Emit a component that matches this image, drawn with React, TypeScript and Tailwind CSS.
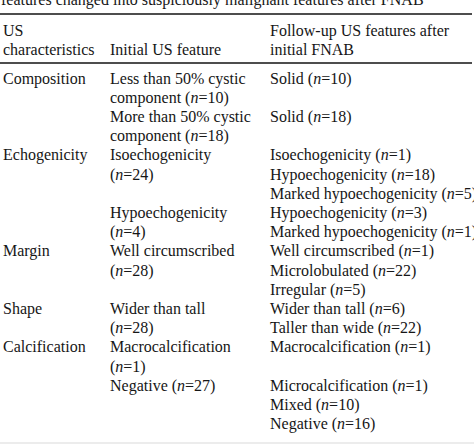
import { Fragment } from 'react';

type SubRow = {
  initial: string[];
  followUp: string[];
};

type Group = {
  name: string;
  rows: SubRow[];
};

// lines are written as "text|n" where the part after | is the italic-n count
const groups: Group[] = [
  {
    name: 'Composition',
    rows: [
      { initial: ['Less than 50% cystic', 'component |10'], followUp: ['Solid |10'] },
      { initial: ['More than 50% cystic', 'component |18'], followUp: ['Solid |18'] },
    ],
  },
  {
    name: 'Echogenicity',
    rows: [
      {
        initial: ['Isoechogenicity', '|24'],
        followUp: ['Isoechogenicity |1', 'Hypoechogenicity |18', 'Marked hypoechogenicity |5'],
      },
      {
        initial: ['Hypoechogenicity', '|4'],
        followUp: ['Hypoechogenicity |3', 'Marked hypoechogenicity |1'],
      },
    ],
  },
  {
    name: 'Margin',
    rows: [
      {
        initial: ['Well circumscribed', '|28'],
        followUp: ['Well circumscribed |1', 'Microlobulated |22', 'Irregular |5'],
      },
    ],
  },
  {
    name: 'Shape',
    rows: [
      {
        initial: ['Wider than tall', '|28'],
        followUp: ['Wider than tall |6', 'Taller than wide |22'],
      },
    ],
  },
  {
    name: 'Calcification',
    rows: [
      { initial: ['Macrocalcification', '|1'], followUp: ['Macrocalcification |1'] },
      {
        initial: ['Negative |27'],
        followUp: ['Microcalcification |1', 'Mixed |10', 'Negative |16'],
      },
    ],
  },
];

const Line = ({ text }: { text: string }) => {
  if (!text.includes('|')) return <div>{text}</div>;
  const [label, count] = text.split('|');
  return (
    <div>
      {label}(<i>n</i>={count})
    </div>
  );
};

const App = () => {
  return (
    <div
      className="w-[474px] h-[444px] overflow-hidden bg-white text-[#161616] text-[16px] leading-[19.2px]"
      style={{ fontFamily: '"Liberation Serif", "Times New Roman", serif' }}
    >
      <div className="-mt-[10px] pl-[1px] whitespace-nowrap">
        features changed into suspiciously malignant features after FNAB
      </div>

      <div className="mt-[4px] w-[472px] border-t-2 border-[#4d4d4d]" />

      <div className="grid grid-cols-[107px_160px_1fr] items-end pl-[3px] pt-[6px] pb-[2px] whitespace-nowrap">
        <div>
          US
          <br />
          characteristics
        </div>
        <div>Initial US feature</div>
        <div>
          Follow-up US features after
          <br />
          initial FNAB
        </div>
      </div>

      <div className="w-[472px] border-t-2 border-[#4d4d4d]" />

      <div className="grid grid-cols-[107px_160px_1fr] pl-[3px] pt-[5px] whitespace-nowrap">
        {groups.map((group) =>
          group.rows.map((row, i) => (
            <Fragment key={group.name + i}>
              <div>{i === 0 ? group.name : ''}</div>
              <div>
                {row.initial.map((t) => (
                  <Line key={t} text={t} />
                ))}
              </div>
              <div>
                {row.followUp.map((t) => (
                  <Line key={t} text={t} />
                ))}
              </div>
            </Fragment>
          ))
        )}
      </div>

      <div className="mt-[9px] border-t-2 border-[#ececec]" />
    </div>
  );
};

export default App;
